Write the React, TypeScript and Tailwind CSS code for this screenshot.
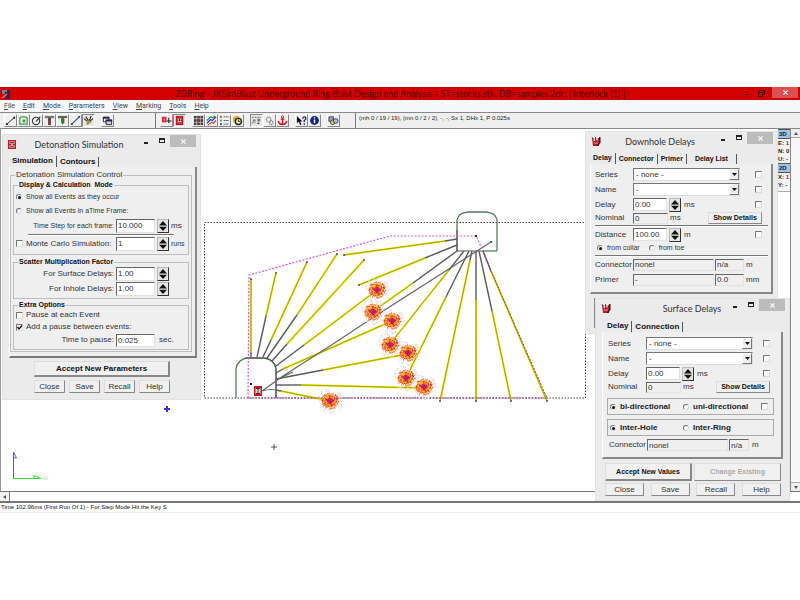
import React, { useId } from "react";
import clsx from "clsx";

type Kids = { children?: React.ReactNode };

/* ---------- shared controls ---------- */

function Row({ children, className = "h-[15px]" }: Kids & { className?: string }) {
  return <div className={clsx("flex items-center", className)}>{children}</div>;
}

function Field({ value, label, className, flat }: { value: string; label: string; className: string; flat?: boolean }) {
  return (
    <input
      aria-label={label}
      defaultValue={value}
      readOnly={flat}
      className={clsx(
        "min-w-0 border-l border-t border-[#666] border-b border-r border-b-[#e2e2e2] border-r-[#e2e2e2] px-px text-[8px] leading-[10px] text-[#333] outline-none",
        flat ? "bg-[#efefef]" : "bg-white",
        className,
      )}
    />
  );
}

function Spinner({ label }: { label: string }) {
  return (
    <button aria-label={label} className="ml-0.5 flex h-[14px] w-3 items-center justify-center border border-b-[#333] border-r-[#333] border-l-[#bbb] border-t-[#bbb] bg-[#e4e4e4]">
      <svg viewBox="0 0 10 12" className="h-3 w-[10px]">
        <path d="M1 5.4 5 1l4 4.400zM1 6.800h8L5 11z" fill="#111" />
      </svg>
    </button>
  );
}

function Check({ label, checked, hidden }: { label: string; checked?: boolean; hidden?: boolean }) {
  return (
    <label className="flex items-center gap-[3px]">
      <span className="relative flex">
        <input
          type="checkbox"
          defaultChecked={checked}
          aria-label={label}
          className="peer size-[7px] appearance-none border border-b-[#ddd] border-r-[#ddd] border-l-[#777] border-t-[#777] bg-[#fafafa]"
        />
        <svg viewBox="0 0 7 7" className="pointer-events-none absolute inset-0 hidden size-[7px] peer-checked:block">
          <path d="M1.500 3 3 5 6 1.500" fill="none" stroke="#111" strokeWidth="1.300" />
        </svg>
      </span>
      {!hidden && <span>{label}</span>}
    </label>
  );
}

function Radio({ label, name, checked, className }: { label: string; name: string; checked?: boolean; className?: string }) {
  return (
    <label className={clsx("flex items-center", className)}>
      <span className="relative mr-1 flex">
        <input
          type="radio"
          name={name}
          defaultChecked={checked}
          className="peer size-[6px] appearance-none rounded-full border border-b-[#ddd] border-r-[#ddd] border-l-[#777] border-t-[#777] bg-white"
        />
        <span className="pointer-events-none absolute left-0.5 top-0.5 hidden size-[3px] rounded-full bg-[#111] peer-checked:block" />
      </span>
      {label}
    </label>
  );
}

function Btn({ children, className }: Kids & { className?: string }) {
  return (
    <button className={clsx("flex items-center justify-center whitespace-nowrap border border-b-[#888] border-r-[#888] border-l-[#ddd] border-t-[#ddd] bg-[#f0f0f0]", className)}>
      {children}
    </button>
  );
}

function Drop({ value, id }: { value: string; id: string }) {
  return (
    <div className="relative flex h-[13px] w-[107px]">
      <select id={id} className="w-full appearance-none border border-b-[#ddd] border-r-[#ddd] border-l-[#777] border-t-[#777] bg-white pl-0.5 text-[8px] leading-[10px] text-[#333]">
        <option>{value}</option>
      </select>
      <span className="pointer-events-none absolute bottom-px right-px top-px flex w-[10px] items-center justify-center border border-b-[#777] border-r-[#777] border-l-white border-t-white bg-[#eee]">
        <svg viewBox="0 0 5 3" className="h-[3px] w-[5px]"><path d="M0 0h5L2.500 3z" fill="#111" /></svg>
      </span>
    </div>
  );
}

function Group({ title, children, className, legend }: Kids & { title: string; className?: string; legend: string }) {
  return (
    <fieldset className={clsx("min-w-0 border border-[#bdbdbd]", className)}>
      <legend className={legend}>{title}</legend>
      {children}
    </fieldset>
  );
}

function Tabs({ items, className }: { items: string[]; className?: string }) {
  return (
    <div role="tablist" className={clsx("flex h-3 items-center font-bold text-[#111]", className)}>
      {items.map((t, i) => (
        <button key={t} role="tab" aria-selected={i === 0} className={clsx("h-[11px] whitespace-nowrap border-r border-[#555]", i > 0 && "mt-0.5", i === 3 ? "px-2" : "px-[3px]")}>
          {t}
        </button>
      ))}
    </div>
  );
}

function Win({ title, icon, className, titleClass, children }: Kids & { title: string; icon: React.ReactNode; className: string; titleClass: string }) {
  return (
    <section className={clsx("absolute flex flex-col border border-[#e2e2e2] bg-[#ebebeb] text-[8px] leading-[10px] text-[#333]", className)}>
      <header className="flex h-[18px] shrink-0 items-start pl-[5px] pr-1 font-[Lato,'Open_Sans',sans-serif]">
        <span className="mt-[5px]">{icon}</span>
        <h2 className={clsx("mt-1 flex-1 whitespace-nowrap text-center text-[9px] leading-3", titleClass)}>{title}</h2>
        <button aria-label="Minimize" className="flex h-[11px] w-4 items-center justify-center">
          <span className="mt-1 h-0.5 w-1 bg-[#222]" />
        </button>
        <button aria-label="Maximize" className="flex h-[11px] w-4 items-center justify-center">
          <span className="h-[5px] w-[6px] border border-t-2 border-[#222]" />
        </button>
        <button aria-label="Close window" className="flex h-3 w-[26px] items-center justify-center bg-[#bcbcbc]">
          <svg viewBox="0 0 6 6" className="size-[5px]"><path d="M.5.5l5 5M5.500.5l-5 5" stroke="#fff" strokeWidth="1.300" /></svg>
        </button>
      </header>
      {children}
    </section>
  );
}

/* ---------- icons ---------- */

function DetonatorIcon() {
  return (
    <svg viewBox="0 0 8 9" className="h-[9px] w-2">
      <path d="M0 0h8v9H0z" fill="#d3141c" />
      <path d="M1.500 1.500h5v2h-1.500v2h1.500v2h-5v-2H3v-2H1.500z" fill="#fff" />
      <path d="M2 2.500h4M4 2.500V6.500M2 6.700h4" stroke="#222" strokeWidth=".8" />
    </svg>
  );
}

function DelayIcon() {
  return (
    <svg viewBox="0 0 10 9" className="h-[9px] w-[10px]">
      <path d="M1 1h7v8H2z" fill="#c01828" />
      <path d="M3.200 0v4M6 0v3.500" stroke="#fff" strokeWidth="1.200" />
      <path d="M1 0l1 3M4.500 0v3" stroke="#444" strokeWidth=".8" />
      <path d="M3 5l1.500 2M6 5v2" stroke="#f6b0b0" strokeWidth=".9" />
      <path d="M8 0h1.500v6L7 9H5.500L8 5.500z" fill="#223" />
    </svg>
  );
}

const TOOLS: Record<string, { label: string; art: React.ReactNode }> = {
  line: { label: "Draw line", art: <><path d="M2 10 10 3" stroke="#222" /><path d="M1 9h2v2H1zM9 2h2v2H9z" fill="#222" /></> },
  tunnel: { label: "Tunnel", art: <><path d="M2 10V4q0-2 3-2h2q3 0 3 2v6z" fill="none" stroke="#3a9a4a" strokeWidth="1.300" /><path d="M5 5h3v3H5z" fill="#3a9a4a" /></> },
  dial: { label: "Dial", art: <><circle cx="5.500" cy="6.500" r="4" fill="none" stroke="#333" strokeWidth="1.200" /><path d="M5.500 7 10 2" stroke="#333" strokeWidth="1.200" /></> },
  hole: { label: "Hole", art: <><path d="M1 1h10v2.500H1z" fill="#777" /><path d="M4.500 3h3v8h-3z" fill="#444" /><path d="M5 6h2v5H5z" fill="#c22" /></> },
  charge: { label: "Charge", art: <><path d="M1 1h10v2.500H1z" fill="#666" /><path d="M4.500 3h3v5L6 11 4.500 8z" fill="#1a8c2a" /><path d="M7 4h1v5H7z" fill="#d11" /></> },
  connect: { label: "Connector", art: <><path d="M2 10 10 2" stroke="#2a48e0" strokeWidth="1.300" /><path d="M1 9h2v2H1zM9 1h2v2H9z" fill="#2440a0" /></> },
  blast: { label: "Blast", art: <><path d="M1 4l4 3M3 2l3 4M9 1 7 6M11 4 7 7M4 10l5-4" stroke="#222" strokeWidth="1.200" /><path d="M4 7l4-1 1 2-4 3z" fill="#aa9c20" /></> },
  cascade: { label: "Cascade", art: <><path d="M1.500 2.500h6v5h-6z" fill="#fff" stroke="#223" /><path d="M1 2h7v2H1z" fill="#223" /><path d="M4.500 5.500h6v5h-6z" fill="#ccd" stroke="#223" /><path d="M4 5h7v2H4z" fill="#226" /></> },
  addRed: { label: "Add point", art: <><path d="M1 2h5v6H1z" fill="#e23" /><path d="M3 4h1v2H3z" fill="#fff" /><path d="M8.500 3v6M6 6.500h5.500" stroke="#222" strokeWidth="1.200" /></> },
  detonate: { label: "Detonate", art: <><path d="M2 1h8v10H2z" fill="#d3141c" /><path d="M4 3h4v2H7v2h1v2H4V7h1V5H4z" fill="#fff" /><path d="M4 3.500h4M6 4v3M4 8.500h4" stroke="#222" /></> },
  grid: { label: "Grid", art: <><path d="M1 1h10v10H1z" fill="#444" /><path d="M1 4h10M1 8h10M4 1v10M8 1v10" stroke="#c8c8c8" strokeWidth=".8" /><circle cx="6" cy="6" r="2" fill="#833" /></> },
  contour: { label: "Contours", art: <><path d="M1 6 5 2l2 1 3-2" fill="none" stroke="#1a9a3a" strokeWidth="1.300" /><path d="M1 9l4-4 2 1 4-4" fill="none" stroke="#24d" strokeWidth="1.500" /><path d="M2 11l4-3 2 1 3-3" fill="none" stroke="#e33" strokeWidth="1.200" /></> },
  legend: { label: "Legend", art: <><path d="M1 1h2v2H1z" fill="#e22" /><path d="M1 5h2v2H1z" fill="#2a4" /><path d="M1 9h2v2H1z" fill="#24d" /><path d="M5 2h6M5 6h6M5 10h6" stroke="#555" strokeDasharray="2 .7" /></> },
  clock: { label: "Timing", art: <><circle cx="5" cy="5" r="4" fill="#e8a617" /><circle cx="7" cy="7" r="3.300" fill="#fff3a0" stroke="#222" strokeWidth="1.500" /><path d="M7 5v2h2" stroke="#222" fill="none" /></> },
  view: { label: "View", art: <><path d="M1 2.500h10M1 8.500h4" stroke="#666" strokeDasharray="2 1" /><path d="M2 5h3v2H2zM7 4h3v3H7z" fill="#777" /><path d="M6 9l3-1v2z" fill="#444" /></> },
  gear: { label: "Options", art: <><circle cx="5" cy="5" r="2.500" fill="none" stroke="#888" strokeWidth="1.500" strokeDasharray="1.500 .8" /><circle cx="8" cy="8.500" r="2" fill="none" stroke="#777" strokeWidth="1.300" strokeDasharray="1.200 .7" /></> },
  anchor: { label: "Anchor", art: <><path d="M6 3v8M1.500 6.500Q2 10.500 6 10.500T10.500 6.500M4 4.500h4" fill="none" stroke="#d3141c" strokeWidth="1.500" /><circle cx="6" cy="2" r="1.200" fill="none" stroke="#d3141c" /></> },
  help: { label: "Context help", art: <><path d="M1 1v8l2-2 1.500 4 1.500-.6L4.500 7H7z" fill="#111" /><path d="M7.300 4Q7.300 2 9 2t1.800 1.500Q10.800 5 9 6v1.500M9 9v1.500" fill="none" stroke="#1b2a9a" strokeWidth="1.500" /></> },
  info: { label: "About", art: <><circle cx="6" cy="6" r="4.800" fill="#14208a" /><path d="M6 5v4M6 2.500v1.400" stroke="#fff" strokeWidth="1.600" /></> },
  web: { label: "Web", art: <><path d="M1 2h5v5H1z" fill="#99b" stroke="#446" /><circle cx="5" cy="8" r="2.500" fill="#dcc84a" stroke="#446" /><circle cx="8.500" cy="6.500" r="2.500" fill="#aac4e8" stroke="#336" /></> },
};

function Tool({ id, pressed }: { id: string; pressed?: boolean }) {
  return (
    <button
      aria-label={TOOLS[id].label}
      className={clsx(
        "flex h-[13px] w-[13px] items-center justify-center border",
        pressed ? "border-b-white border-l-[#888] border-r-white border-t-[#888] bg-[#e6e6e6]" : "border-b-[#888] border-l-white border-r-[#888] border-t-white bg-[#f0f0f0]",
      )}
    >
      <svg viewBox="0 0 12 12" className="size-[11px] shrink-0">{TOOLS[id].art}</svg>
    </button>
  );
}

/* ---------- ring drawing ---------- */

type Hole = [number, number, number, number, number, number];

// collar x/y, end of stemming x/y, toe x/y
const HOLES: Hole[] = [
  [251, 357, 251, 352, 251, 279],
  [257, 357, 266, 316, 276, 273],
  [263, 357, 271, 340, 307, 262],
  [267, 358, 297, 315, 337, 254],
  [272, 361, 287, 344, 364, 260],
  [276, 366, 304, 345, 377, 290],
  [276, 373, 283, 369, 392, 321],
  [276, 379, 323, 370, 407, 354],
  [276, 385, 301, 385, 424, 388],
  [276, 390, 281, 391, 330, 401],
  [457, 239, 445, 241, 344, 255],
  [457, 245, 425, 258, 359, 285],
  [457, 251, 413, 283, 372, 312],
  [464, 251, 449, 270, 390, 344],
  [469, 251, 446, 297, 406, 378],
  [472, 251, 470, 260, 440, 401],
  [476, 251, 476, 300, 476, 401],
  [479, 251, 492, 311, 511, 401],
  [483, 251, 491, 271, 547, 401],
];

const BLASTS = [[377, 290], [373, 312], [392, 321], [390, 345], [408, 353], [406, 378], [424, 387], [330, 401]];

function makeSpecks() {
  let seed = 7;
  const rnd = () => {
    seed = (seed * 16807) % 2147483647;
    return seed / 2147483647;
  };
  const out: { x: number; y: number; c: string }[] = [];
  const push = (count: number, from: number, to: number, colors: string[]) => {
    for (let i = 0; i < count; i++) {
      const a = rnd() * Math.PI * 2;
      const r = from + rnd() * (to - from);
      out.push({ x: Math.cos(a) * r, y: Math.sin(a) * r, c: colors[Math.floor(rnd() * colors.length)] });
    }
  };
  push(60, 8, 13, ["#d8d8d8", "#cccccc", "#f0d8c0", "#e0e0e0"]);
  push(110, 5, 8.5, ["#f83818", "#f02418", "#ff6a20", "#f8a040"]);
  push(90, 3, 6.500, ["#ffd22e", "#ffa020", "#f83818", "#ffe040"]);
  push(50, 0, 4, ["#d81838", "#e02020", "#b820a0", "#d02070"]);
  return out;
}
const SPECKS = makeSpecks();

function Blast({ x, y }: { x: number; y: number }) {
  return (
    <g transform={`translate(${x} ${y})`}>
      <circle r="6.500" fill="#fb8a30" />
      {SPECKS.map((s, i) => (
        <rect key={i} x={s.x - 0.5} y={s.y - 0.5} width="1.100" height="1.100" fill={s.c} />
      ))}
      <path d="M-3 0h7M0-3v6" stroke="#b01880" strokeWidth="1.300" opacity=".8" />
    </g>
  );
}

function RingDrawing() {
  return (
    <svg viewBox="0 129 800 362" className="absolute left-0 top-0 h-[362px] w-[800px]" role="img" aria-label="Ring blast design">
      <path d="M.5 129V491" stroke="#999" />
      <path d="M204.500 222.500H585.500V398H204.500z" fill="none" stroke="#444" strokeDasharray="1.500 1.500" />
      <path d="M236 398V369Q237 360 247 358H264Q275 360 276 369V398M457 251V220Q458 213 468 212H486Q496 213 497 220V251" fill="none" stroke="#547f58" strokeWidth="1.300" />
      <path d="M245 358H266Q275 360 276 369V398M457 230V251H483" fill="none" stroke="#555" />
      <path d="M483 251H497" stroke="#547f58" strokeWidth="1.300" />
      {HOLES.map(([a, b, c, d, e, f], i) => (
        <g key={i}>
          <path d={`M${c} ${d}L${e} ${f}`} stroke="#ece800" strokeWidth="2" />
          <path d={`M${c} ${d}L${e} ${f}`} stroke="#a8a200" strokeWidth="1" />
          <path d={`M${a} ${b}L${c} ${d}`} stroke="#5a5a5a" strokeWidth="1.400" />
          <circle cx={e} cy={f} r=".9" fill="#444" />
        </g>
      ))}
      <path d="M262 391 283 376 330 346 380 313 491 242M276 380 293 372M262 391Q272 388 280 391" fill="none" stroke="#666" strokeWidth="1.200" />
      <path d="M248 398 249 275 390 236H476L483 251" fill="none" stroke="#e050e0" strokeWidth="1.200" strokeDasharray="2 1.500" />
      <path d="M248 398H547L491 271 483 251" fill="none" stroke="#9a3090" strokeWidth="1" strokeDasharray="1.800 1.500" />
      <path d="M475 235h2v2h-2zM250 383h2v2h-2z" fill="#222" />
      <path d="M490 241h2v2h-2z" fill="#35c" />
      {BLASTS.map(([x, y]) => <Blast key={`${x}-${y}`} x={x} y={y} />)}
      <path d="M254 386h8v10h-8z" fill="#d3141c" />
      <path d="M255.500 388h5v6h-5z" fill="#ddd" />
      <path d="M256 388.500h4M258 389v4M256 393.500h4" stroke="#333" />
      <path d="M167 406v6M164 409h6" stroke="#3535f0" strokeWidth="2" />
      <path d="M274 444v6M271 447h6" stroke="#555" />
      <path d="M13.500 479V452M13.500 452l3 6h-3" fill="none" stroke="#5050ff" />
      <path d="M13 478.500H41L34 475.500v3" fill="none" stroke="#30dd30" />
    </svg>
  );
}

/* ---------- windows ---------- */

const SMALL_LEGEND = "ml-0.5 h-2 whitespace-pre px-px text-[7px] font-bold leading-2 text-[#111]";

function DetonationWindow() {
  return (
    <Win title="Detonation Simulation" icon={<DetonatorIcon />} className="left-0.5 top-[5px] w-[199px] pb-1.5" titleClass="pl-4 pr-3">
      <Tabs items={["Simulation", "Contours"]} className="ml-1.5 mt-0.5" />
      <div className="ml-1.5 mr-[3px] border-b-2 border-l border-r-2 border-b-[#777] border-l-white border-r-[#888] bg-[#efefef] pb-1 pr-[3px] pt-[3px]">
        <Group title="Detonation Simulation Control" className="px-0.5 pb-px" legend="ml-0.5 h-[10px] px-px text-[8px] leading-[10px]">
          <Group title="Display & Calculation  Mode" className="mt-px px-0.5 pb-[3px]" legend={SMALL_LEGEND}>
            <Row className="h-[15px] text-[7px]"><Radio name="mode" checked label="Show all Events as they occur" /></Row>
            <Row className="h-[14px] text-[7px]"><Radio name="mode" label="Show all Events in aTime Frame:" /></Row>
            <Row>
              <span className="mr-0.5 w-[98px] text-right text-[7px]">Time Step for each frame:</span>
              <Field label="Time Step for each frame" value="10.000" className="h-[14px] w-[39px]" />
              <Spinner label="Adjust time step" /><span className="ml-0.5">ms</span>
            </Row>
            <div className="ml-3 mr-3 mt-px h-0.5 border-t border-[#777] bg-white" />
            <Row>
              <div className="mr-0.5 w-[98px] text-[8px]"><Check label="Monte Carlo Simulation:" /></div>
              <Field label="Monte Carlo runs" value="1" className="h-[14px] w-[39px]" />
              <Spinner label="Adjust runs" /><span className="ml-0.5 text-[7px]">runs</span>
            </Row>
          </Group>
          <Group title="Scatter Multiplication Factor" className="mt-[3px] px-0.5 pb-0.5" legend={SMALL_LEGEND}>
            {["For Surface Delays:", "For Inhole Delays:"].map((t) => (
              <Row key={t}>
                <span className="mr-0.5 w-[98px] text-right">{t}</span>
                <Field label={t} value="1.00" className="h-[14px] w-[39px]" />
                <Spinner label={`Adjust ${t}`} />
              </Row>
            ))}
          </Group>
          <Group title="Extra Options" className="mt-0.5 px-0.5 pb-0.5" legend={SMALL_LEGEND}>
            <Row className="h-3"><Check label="Pause at each Event" /></Row>
            <Row className="h-3"><Check label="Add a pause between events:" checked /></Row>
            <Row className="h-[14px]">
              <span className="mr-0.5 w-[98px] text-right">Time to pause:</span>
              <Field label="Time to pause" value="0.025" className="h-[13px] w-[39px]" />
              <span className="ml-1">sec.</span>
            </Row>
          </Group>
        </Group>
      </div>
      <div className="ml-[31px] mr-[30px] mt-[3px]">
        <Btn className="h-4 w-full border-b-2 border-r-2 font-bold text-[#111]">Accept New Parameters</Btn>
        <div className="mt-[3px] flex justify-between">
          {["Close", "Save", "Recall", "Help"].map((t) => <Btn key={t} className="h-[13px] w-[31px]">{t}</Btn>)}
        </div>
      </div>
    </Win>
  );
}

function DelayRows({ gap }: { gap: string }) {
  const id = useId();
  return (
    <>
      {[["Series", "- none -"], ["Name", "-"]].map(([t, v]) => (
        <Row key={t}>
          <label htmlFor={id + t} className={gap}>{t}</label>
          <Drop id={id + t} value={v} />
          <span className="ml-auto"><Check label={`Apply ${t}`} hidden /></span>
        </Row>
      ))}
      <Row>
        <span className={gap}>Delay</span>
        <Field label="Delay" value="0.00" className="h-[13px] w-[34px]" />
        <Spinner label="Adjust delay" /><span className="ml-[3px]">ms</span>
        <span className="ml-auto"><Check label="Apply delay" hidden /></span>
      </Row>
      <Row className="h-3">
        <span className={gap}>Nominal</span>
        <Field label="Nominal" value="0" flat className="h-[11px] w-[35px]" />
        <span className="ml-0.5">ms</span>
        <Btn className="ml-auto h-3 w-[54px] text-[7px] font-bold text-[#111]">Show Details</Btn>
      </Row>
    </>
  );
}

function DownholeWindow() {
  const label = "w-[38px] shrink-0";
  return (
    <Win title="Downhole Delays" icon={<DelayIcon />} className="left-[585px] top-[2px] h-[203px] w-[193px]" titleClass="pl-4 pr-3">
      <Tabs items={["Delay", "Connector", "Primer", "Delay List"]} className="ml-1 mt-0.5 text-[7px]" />
      <div className="ml-1 mr-1 h-[130px] border-b-2 border-l border-r-2 border-b-[#888] border-l-white border-r-[#888] bg-[#efefef] pl-1 pr-[9px] pt-[3px]">
        <DelayRows gap={label} />
        <div className="-mr-1.5 mt-px h-0.5 border-t border-[#777] bg-white" />
        <Row>
          <span className={label}>Distance</span>
          <Field label="Distance" value="100.00" className="h-[13px] w-[34px]" />
          <Spinner label="Adjust distance" /><span className="ml-[3px]">m</span>
          <span className="ml-auto"><Check label="Apply distance" hidden /></span>
        </Row>
        <Row className="h-3 text-[7px]">
          <Radio name="from" checked label="from collar" className="ml-0.5" />
          <Radio name="from" label="from toe" className="ml-[9px]" />
        </Row>
        <div className="-mr-1.5 mt-px h-0.5 border-t border-[#777] bg-white" />
        {[["Connector", "nonel", "n/a", "m"], ["Primer", "-", "0.0", "mm"]].map(([t, a, b, u]) => (
          <Row key={t}>
            <span className={label}>{t}</span>
            <Field label={t} value={a} flat className="h-3 w-[81px]" />
            <Field label={`${t} amount`} value={b} flat className="ml-px h-3 w-[29px]" />
            <span className="ml-0.5">{u}</span>
          </Row>
        ))}
      </div>
      <div className="ml-2 mr-24 mt-1 h-[30px] border-l border-t border-[#888]" />
    </Win>
  );
}

function SurfaceWindow() {
  return (
    <Win title="Surface Delays" icon={<DelayIcon />} className="left-[595px] top-[169px] h-[203px] w-[195px]" titleClass="pl-[46px]">
      <Tabs items={["Delay", "Connection"]} className="ml-2 mt-[3px]" />
      <div className="ml-1.5 mr-1.5 h-[127px] border-b-2 border-l border-r-2 border-b-[#888] border-l-white border-r-[#888] bg-[#efefef] pl-1 pr-[7px] pt-1">
        <div className="pl-px pr-1"><DelayRows gap="w-[38px] shrink-0" /></div>
        <div className="mt-[5px] flex h-[17px] items-center border border-[#aaa] pl-0.5 pr-[5px] font-bold text-[#222]">
          <Radio name="dir" checked label="bi-directional" className="w-[73px]" />
          <Radio name="dir" label="uni-directional" />
          <span className="ml-auto"><Check label="Apply direction" hidden /></span>
        </div>
        <div className="mt-1 flex h-[17px] items-center border border-[#aaa] pl-0.5 font-bold text-[#222]">
          <Radio name="inter" checked label="Inter-Hole" className="w-[73px]" />
          <Radio name="inter" label="Inter-Ring" />
        </div>
        <Row className="mt-0.5 h-[14px] pl-0.5">
          <span className="w-[38px] shrink-0">Connector</span>
          <Field label="Connector" value="nonel" flat className="h-3 w-[81px]" />
          <Field label="Connector length" value="n/a" flat className="ml-px h-3 w-5" />
          <span className="ml-[3px]">m</span>
        </Row>
      </div>
      <div className="ml-[9px] mr-2 mt-1">
        <div className="flex justify-between text-[7px] font-bold">
          <Btn className="h-[18px] w-[87px] border-b-2 border-r-2 text-[#111]">Accept New Values</Btn>
          <Btn className="h-[18px] w-[87px] text-[#aaa]">Change Existing</Btn>
        </div>
        <div className="mt-0.5 flex justify-between">
          {["Close", "Save", "Recall", "Help"].map((t) => <Btn key={t} className="h-[13px] w-[39px]">{t}</Btn>)}
        </div>
      </div>
    </Win>
  );
}

function Coordinates() {
  return (
    <aside className="absolute right-[9px] top-0 w-[13px] whitespace-nowrap border-r border-[#888] bg-[#f4f4f4] text-[6px] font-bold leading-2 text-[#222]">
      <div className="border-b border-t border-[#555] bg-[#9cc4ea] pl-px">3D</div>
      <div>E: <span className="text-[#a22]">1</span></div>
      <div>N: 0</div>
      <div>U: -</div>
      <div className="border-b border-t border-[#555] bg-[#9cc4ea] pl-px">2D</div>
      <div>X: <span className="text-[#a22]">1</span></div>
      <div className="border-b border-[#aaa] pb-0.5">Y: -</div>
    </aside>
  );
}

const MENU = ["File", "Edit", "Mode", "Parameters", "View", "Marking", "Tools", "Help"];

export default function App() {
  return (
    <div className="min-h-screen overflow-hidden bg-white pt-[87px] font-['Liberation_Sans',Arial,sans-serif]">
      <header className="flex h-[13px] bg-[#d20000] font-[Lato,'Open_Sans',sans-serif]">
        <svg viewBox="0 0 10 10" className="ml-px mt-0.5 size-[10px]">
          <path d="M0 1h9v9H5V5H0z" fill="#222d50" />
          <path d="M1 2h5M1 4h3" stroke="#bcd" />
          <path d="M1 9 6 5" stroke="#f66" strokeWidth="1.500" />
        </svg>
        <h1 className="flex-1 whitespace-nowrap pl-[51px] text-center text-[9px] leading-[13px] text-[#4a0808]">
          2DRing - JKSimBlast Underground Ring Blast Design and Analysis - ST=stocks.stk, DB=samples.2dr: [ interlock (1) ]
        </h1>
        <button aria-label="Minimize" className="flex w-4 items-center justify-center"><span className="mt-0.5 h-px w-1 bg-[#400]" /></button>
        <button aria-label="Restore" className="flex w-3.5 items-center justify-center">
          <svg viewBox="0 0 7 7" className="size-[7px]"><path d="M2 2V.500h4.500v4H5M.500 2.500h4v4h-4z" fill="none" stroke="#400" /></svg>
        </button>
        <button aria-label="Close" className="ml-1 mr-0.5 flex h-[11px] w-[26px] items-center justify-center bg-[#dc5050]">
          <svg viewBox="0 0 6 6" className="size-[5px]"><path d="M.500.500l5 5M5.500.500l-5 5" stroke="#fff" strokeWidth="1.300" /></svg>
        </button>
      </header>

      <nav className="flex h-3 items-center gap-2 bg-[#f6f7f9] pl-1 font-[Roboto,'Open_Sans',sans-serif] text-[7px] leading-3 text-[#444]">
        {MENU.map((m) => (
          <button key={m}><span className="underline">{m[0]}</span>{m.slice(1)}</button>
        ))}
      </nav>

      <div role="toolbar" className="flex h-[17px] border-b border-t border-[#888] bg-[#efefef]">
        <div className="flex w-[156px] items-center border-r border-[#777] pl-1">
          {["line", "tunnel", "dial", "hole", "charge", "connect"].map((t) => <Tool key={t} id={t} />)}
          <Tool id="blast" pressed />
          <span className="w-1.5" />
          <Tool id="cascade" />
        </div>
        <div className="flex w-[200px] items-center border-r border-[#777] pl-1">
          <Tool id="addRed" /><Tool id="detonate" pressed />
          <span className="w-1.5" />
          <Tool id="grid" /><Tool id="contour" /><Tool id="legend" /><Tool id="clock" />
          <span className="w-1.5" />
          <Tool id="view" pressed /><Tool id="gear" /><Tool id="anchor" />
          <span className="w-1.5" />
          <Tool id="help" /><Tool id="info" />
          <span className="w-1.5" />
          <Tool id="web" />
        </div>
        <p className="flex-1 whitespace-nowrap pl-[3px] pt-px text-[6px] leading-[9px] text-[#222]">(mh 0 / 19 / 19), (mn 0 / 2 / 2), -, -, Sx 1, DHx 1, P 0.025s</p>
      </div>

      <main className="relative h-[362px]">
        <RingDrawing />
        <div className="absolute inset-y-0 right-0 flex w-[10px] flex-col justify-between border-l border-[#888] bg-[#f7f7f7]">
          <button aria-label="Scroll up" className="flex h-[9px] items-center justify-center border-b border-[#aaa] bg-[#eee]"><svg viewBox="0 0 4 3" className="h-[3px] w-1"><path d="M0 3h4L2 0z" fill="#555" /></svg></button>
          <button aria-label="Scroll down" className="flex h-[9px] items-center justify-center border-t border-[#aaa] bg-[#eee]"><svg viewBox="0 0 4 3" className="h-[3px] w-1"><path d="M0 0h4L2 3z" fill="#555" /></svg></button>
        </div>
        <Coordinates />
        <DetonationWindow />
        <DownholeWindow />
        <SurfaceWindow />
      </main>

      <div className="flex h-3 border-b-2 border-t border-[#777] bg-white">
        <button aria-label="Scroll left" className="flex w-[10px] items-center justify-center border-r border-[#777] bg-[#f0f0f0]"><svg viewBox="0 0 3 4" className="h-1 w-[3px]"><path d="M3 0v4L0 2z" fill="#555" /></svg></button>
      </div>
      <footer className="h-[10px] whitespace-nowrap border-b border-[#eee] pl-px text-[6px] leading-[9px] text-[#111]">Time 102.96ms (First Run Of 1) - For Step Mode Hit the Key S</footer>
    </div>
  );
}
